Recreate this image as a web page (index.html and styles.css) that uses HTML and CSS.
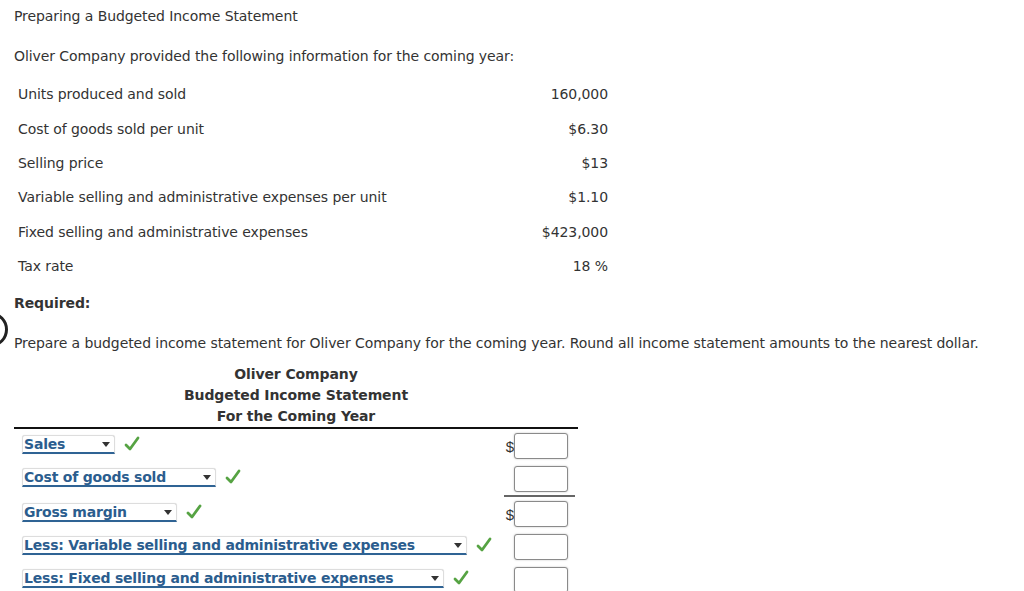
FILE: index.html
```html
<!DOCTYPE html>
<html>
<head>
<meta charset="utf-8">
<link rel="stylesheet" href="styles.css">
</head>
<body>
<div class="page">
  <div class="arc"></div>
  <p class="title">Preparing a Budgeted Income Statement</p>
  <p class="intro">Oliver Company provided the following information for the coming year:</p>
  <div class="data">
    <div class="drow"><span>Units produced and sold</span><span>160,000</span></div>
    <div class="drow"><span>Cost of goods sold per unit</span><span>$6.30</span></div>
    <div class="drow"><span>Selling price</span><span>$13</span></div>
    <div class="drow"><span>Variable selling and administrative expenses per unit</span><span>$1.10</span></div>
    <div class="drow"><span>Fixed selling and administrative expenses</span><span>$423,000</span></div>
    <div class="drow"><span>Tax rate</span><span>18 %</span></div>
  </div>
  <p class="required">Required:</p>
  <p class="prepare">Prepare a budgeted income statement for Oliver Company for the coming year. Round all income statement amounts to the nearest dollar.</p>
  <div class="statement">
    <div class="head">
      <div>Oliver Company</div>
      <div>Budgeted Income Statement</div>
      <div>For the Coming Year</div>
    </div>
    <div class="srow">
      <div class="label">
        <span class="sel w1">Sales<i class="arrow"></i></span>
        <svg class="check" viewBox="0 0 16 16"><path d="M2 9 L6 13 L14 2"/></svg>
      </div>
      <div class="amt"><span class="dollar">$</span><span class="box"></span></div>
    </div>
    <div class="srow">
      <div class="label">
        <span class="sel w2">Cost of goods sold<i class="arrow"></i></span>
        <svg class="check" viewBox="0 0 16 16"><path d="M2 9 L6 13 L14 2"/></svg>
      </div>
      <div class="amt"><span class="dollar"></span><span class="box"></span></div>
    </div>
    <div class="rule-row"><div class="rule"></div></div>
    <div class="srow">
      <div class="label">
        <span class="sel w3">Gross margin<i class="arrow"></i></span>
        <svg class="check" viewBox="0 0 16 16"><path d="M2 9 L6 13 L14 2"/></svg>
      </div>
      <div class="amt"><span class="dollar">$</span><span class="box"></span></div>
    </div>
    <div class="srow">
      <div class="label">
        <span class="sel w4">Less: Variable selling and administrative expenses<i class="arrow"></i></span>
        <svg class="check" viewBox="0 0 16 16"><path d="M2 9 L6 13 L14 2"/></svg>
      </div>
      <div class="amt"><span class="dollar"></span><span class="box"></span></div>
    </div>
    <div class="srow">
      <div class="label">
        <span class="sel w5">Less: Fixed selling and administrative expenses<i class="arrow"></i></span>
        <svg class="check" viewBox="0 0 16 16"><path d="M2 9 L6 13 L14 2"/></svg>
      </div>
      <div class="amt"><span class="dollar"></span><span class="box"></span></div>
    </div>
  </div>
</div>
</body>
</html>
```
FILE: styles.css
```css
html, body {
  margin: 0;
  padding: 0;
  background: #fff;
}
body {
  font-family: "DejaVu Sans", Verdana, sans-serif;
  font-size: 14px;
  color: #333;
  letter-spacing: -0.08px;
}
.page {
  position: relative;
  padding: 6px 0 0 14px;
  height: 585px;
  overflow: hidden;
  border-bottom: 1px solid #e6e6e6;
}
.arc {
  position: absolute;
  left: -26px;
  top: 312px;
  width: 28px;
  height: 29px;
  border: 3px solid #222;
  border-radius: 50%;
}
p {
  margin: 0;
  line-height: 20px;
}
.intro {
  margin-top: 20px;
}
.data {
  margin-top: 11px;
  width: 590px;
  padding-left: 4px;
}
.drow {
  display: flex;
  justify-content: space-between;
  align-items: center;
  height: 34.4px;
}
.required {
  margin-top: 10px;
  font-weight: bold;
}
.prepare {
  margin-top: 20px;
}
.statement {
  margin-top: 11px;
  width: 564px;
}
.head {
  text-align: center;
  font-weight: bold;
  letter-spacing: -0.1px;
  line-height: 21px;
  border-bottom: 2px solid #111;
}
.srow {
  display: flex;
  align-items: center;
  justify-content: space-between;
  height: 33px;
}
.label {
  display: flex;
  align-items: center;
  padding-left: 8px;
  margin-top: -3px;
}
.sel {
  position: relative;
  display: inline-block;
  font-weight: bold;
  letter-spacing: -0.2px;
  color: #2b5d8e;
  line-height: 16px;
  height: 16px;
  padding-left: 1px;
  border: 1px solid #ddd;
  border-bottom: 2px solid #2f6394;
  border-radius: 3px 3px 0 0;
  background: #fff;
  box-shadow: 0 0 1px rgba(0,0,0,0.15);
}
.w1 { width: 90px; }
.w2 { width: 191px; }
.w3 { width: 152px; }
.w4 { width: 442px; }
.w5 { width: 419px; }
.arrow {
  position: absolute;
  right: 4px;
  top: 6px;
  width: 0;
  height: 0;
  border-left: 4px solid transparent;
  border-right: 4px solid transparent;
  border-top: 5px solid #333;
}
.check {
  width: 16px;
  height: 16px;
  margin-left: 9px;
  fill: none;
  stroke: #56a343;
  stroke-width: 2.8;
  stroke-linecap: round;
  stroke-linejoin: round;
}
.amt {
  display: flex;
  align-items: center;
  padding-right: 10px;
}
.dollar {
  width: 10px;
  text-align: right;
  font-family: "Liberation Sans", Arial, sans-serif;
  font-size: 15px;
  color: #333;
  margin-top: 2px;
}
.box {
  display: block;
  width: 52px;
  height: 24px;
  border: 1px solid #8a8a8a;
  border-radius: 3px;
  box-shadow: 0 0 2px rgba(0,0,0,0.25);
  background: #fff;
}
.rule-row {
  display: flex;
  justify-content: flex-end;
  padding-right: 3px;
}
.rule {
  width: 71px;
  height: 2px;
  background: #666;
}
```
